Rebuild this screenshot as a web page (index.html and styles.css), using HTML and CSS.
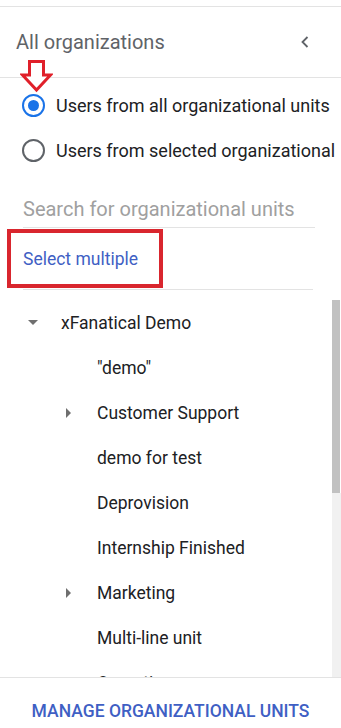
FILE: index.html
```html
<!DOCTYPE html>
<html>
<head>
<meta charset="utf-8">
<link rel="stylesheet" href="styles.css">
</head>
<body>
<div class="panel">
  <div class="header">
    <span class="title">All organizations</span>
    <svg class="chev" width="12" height="14" viewBox="0 0 12 14"><path d="M8.5 2 L3.5 7 L8.5 12" fill="none" stroke="#5f6368" stroke-width="1.8"/></svg>
  </div>
  <div class="radios">
    <label class="radio-row"><span class="radio on"><span class="dot"></span></span><span class="rlabel">Users from all organizational units</span></label>
    <label class="radio-row"><span class="radio"></span><span class="rlabel">Users from selected organizational units</span></label>
  </div>
  <div class="search">Search for organizational units</div>
  <div class="select-multi">Select multiple</div>
  <div class="tree-wrap">
    <ul class="tree">
      <li class="node root"><span class="caret down"></span><span>xFanatical Demo</span></li>
      <li class="node child"><span class="caret none"></span><span>"demo"</span></li>
      <li class="node child"><span class="caret right"></span><span>Customer Support</span></li>
      <li class="node child"><span class="caret none"></span><span>demo for test</span></li>
      <li class="node child"><span class="caret none"></span><span>Deprovision</span></li>
      <li class="node child"><span class="caret none"></span><span>Internship Finished</span></li>
      <li class="node child"><span class="caret right"></span><span>Marketing</span></li>
      <li class="node child"><span class="caret none"></span><span>Multi-line unit</span></li>
      <li class="node child"><span class="caret none"></span><span>Operations</span></li>
    </ul>
    <div class="scrollbar"><div class="thumb"></div><div class="track"></div></div>
  </div>
  <div class="footer">MANAGE ORGANIZATIONAL UNITS</div>

  <div class="highlight-box"></div>
  <svg class="red-arrow" width="33" height="35" viewBox="0 0 33 35"><path d="M9.5 2.5 H23.5 V16 H30.5 L16.5 31 L2.5 16 H9.5 Z" fill="#fff" stroke="#e0202a" stroke-width="3" stroke-linejoin="miter"/></svg>
</div>
</body>
</html>
```

FILE: styles.css
```css
* { box-sizing: border-box; }
html, body { margin: 0; padding: 0; }
body {
  width: 341px;
  height: 728px;
  overflow: hidden;
  background: #fff;
  font-family: Roboto, "Liberation Sans", sans-serif;
  color: #202124;
}
.panel {
  position: relative;
  width: 341px;
  height: 728px;
  padding-top: 6px;
  display: flex;
  flex-direction: column;
}
.header {
  height: 72px;
  flex: none;
  border-top: 1px solid #e3e3e3;
  border-bottom: 1px solid #e3e3e3;
  display: flex;
  align-items: center;
  justify-content: space-between;
  padding: 0 30px 0 16px;
}
.title {
  font-size: 20px;
  color: #5f6368;
}
.chev { display: block; }
.radios {
  display: flex;
  flex-direction: column;
  padding-top: 5px;
  flex: none;
}
.radio-row {
  height: 45px;
  display: flex;
  align-items: center;
  padding-left: 22px;
  margin-right: 6px;
  white-space: nowrap;
  overflow: hidden;
}
.radio {
  width: 23px;
  height: 23px;
  border-radius: 50%;
  border: 2px solid #5f6368;
  display: flex;
  align-items: center;
  justify-content: center;
  flex: none;
}
.radio.on { border-color: #1a73e8; }
.dot { width: 11px; height: 11px; border-radius: 50%; background: #1a73e8; }
.rlabel {
  font-size: 18px;
  margin-left: 11px;
  color: #202124;
}
.search {
  flex: none;
  margin: 21px 26px 0 23px;
  height: 34px;
  border-bottom: 1px solid #e3e3e3;
  font-size: 20px;
  line-height: 23px;
  color: #a0a0a0;
  padding-top: 4px;
  white-space: nowrap;
}
.select-multi {
  flex: none;
  margin: 0 28px 0 23px;
  height: 62px;
  border-bottom: 1px solid #e3e3e3;
  display: flex;
  align-items: center;
  font-size: 17.5px;
  color: #3f5fc4;
}
.tree-wrap {
  flex: 1;
  display: flex;
  overflow: hidden;
  min-height: 0;
}
.tree {
  flex: 1;
  list-style: none;
  margin: 0;
  padding: 10px 0 0 0;
  overflow: hidden;
}
.node {
  height: 45px;
  display: flex;
  align-items: center;
  font-size: 17.5px;
  color: #202124;
  white-space: nowrap;
}
.node.root { padding-left: 28px; }
.node.child { padding-left: 66px; }
.caret { flex: none; width: 0; height: 0; }
.caret.down {
  border-left: 5px solid transparent;
  border-right: 5px solid transparent;
  border-top: 5px solid #6f6f6f;
  margin-right: 23px;
}
.caret.right {
  border-top: 5px solid transparent;
  border-bottom: 5px solid transparent;
  border-left: 5px solid #6f6f6f;
  margin-right: 26px;
}
.caret.none { width: 5px; margin-right: 26px; }
.scrollbar {
  width: 9px;
  flex: none;
  display: flex;
  flex-direction: column;
}
.thumb {
  margin-top: 10px;
  height: 193px;
  width: 8px;
  background: #c1c1c1;
}
.track { flex: 1; background: #f1f1f1; }
.footer {
  height: 51px;
  flex: none;
  border-top: 1px solid #e3e3e3;
  display: flex;
  align-items: center;
  justify-content: center;
  font-size: 17.5px;
  font-weight: 500;
  color: #3f5fc4;
  padding-top: 16px;
}
.highlight-box {
  position: absolute;
  left: 7px;
  top: 229px;
  width: 156px;
  height: 59px;
  border: 4px solid #d9262e;
}
.red-arrow {
  position: absolute;
  left: 20px;
  top: 59px;
}
```
